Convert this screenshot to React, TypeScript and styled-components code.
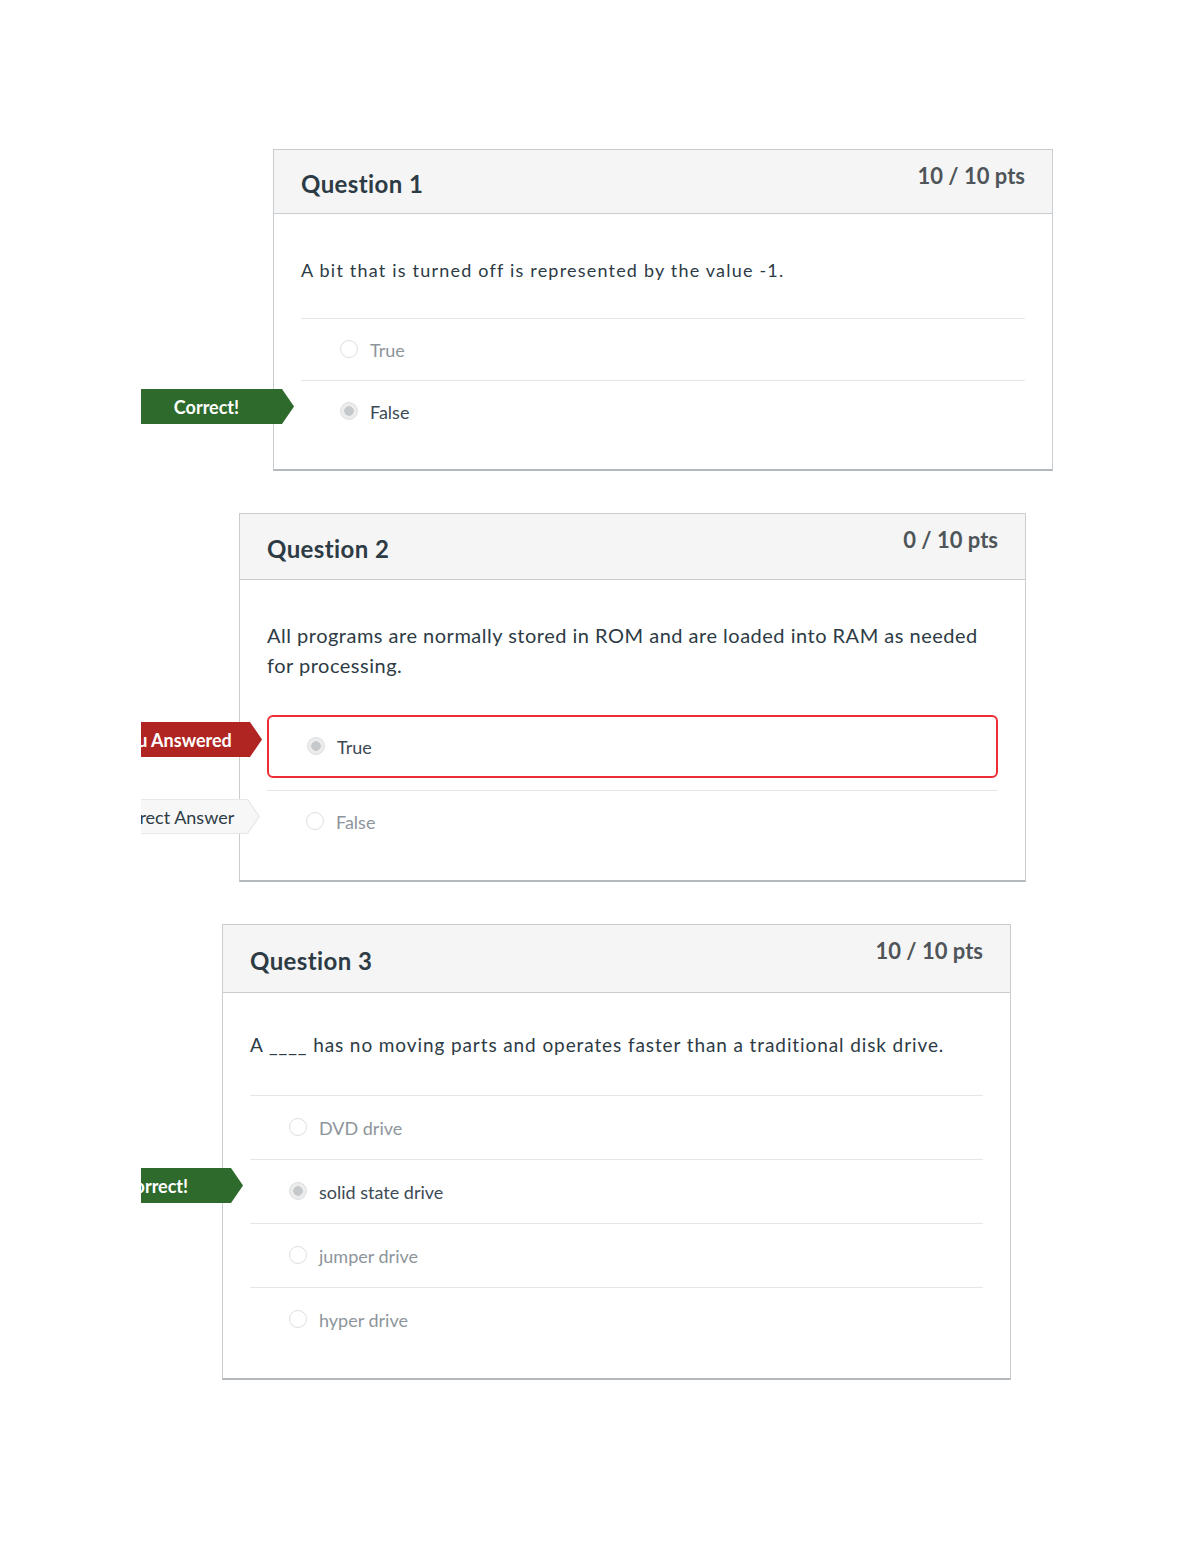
import { FC } from "react";
import styled, { createGlobalStyle } from "styled-components";

const GlobalStyle = createGlobalStyle`
    body {
        margin: 0;
        background: #ffffff;
        font-family: Lato, "Open Sans", sans-serif;
        color: #2d3b45;
    }
`;

type BadgeKind = "correct" | "wrong" | "answer";

interface Answer {
    text: string;
    selected?: boolean;
    wrong?: boolean;
    badge?: BadgeKind;
}

interface Question {
    title: string;
    pts: string;
    text: string;
    textSize: number;
    spacing: number;
    offset: number;
    width: number;
    headerH: number;
    padTop: number;
    textGap: number;
    rowH: number;
    answers: Answer[];
}

const QUESTIONS: Question[] = [
    {
        title: "Question 1",
        pts: "10 / 10 pts",
        text: "A bit that is turned off is represented by the value -1.",
        textSize: 18,
        spacing: 1.2,
        offset: 132,
        width: 780,
        headerH: 64,
        padTop: 41,
        textGap: 33,
        rowH: 62,
        answers: [
            { text: "True" },
            { text: "False", selected: true, badge: "correct" },
        ],
    },
    {
        title: "Question 2",
        pts: "0 / 10 pts",
        text: "All programs are normally stored in ROM and are loaded into RAM as needed for processing.",
        textSize: 20,
        spacing: 0.5,
        offset: 98,
        width: 787,
        headerH: 66,
        padTop: 40,
        textGap: 35,
        rowH: 63,
        answers: [
            { text: "True", selected: true, wrong: true, badge: "wrong" },
            { text: "False", badge: "answer" },
        ],
    },
    {
        title: "Question 3",
        pts: "10 / 10 pts",
        text: "A ____ has no moving parts and operates faster than a traditional disk drive.",
        textSize: 19,
        spacing: 0.9,
        offset: 81,
        width: 789,
        headerH: 68,
        padTop: 37,
        textGap: 35,
        rowH: 64,
        answers: [
            { text: "DVD drive" },
            { text: "solid state drive", selected: true, badge: "correct" },
            { text: "jumper drive" },
            { text: "hyper drive" },
        ],
    },
];

const BADGE_TEXT: Record<BadgeKind, string> = {
    correct: "Correct!",
    wrong: "You Answered",
    answer: "Correct Answer",
};

const Stage = styled.div`
    margin-left: 141px;
    width: 1059px;
    overflow: hidden;
    padding: 149px 0 170px;
    display: flex;
    flex-direction: column;
    gap: 42px;
`;

const Card = styled.div<{ $offset: number; $width: number }>`
    margin-left: ${p => p.$offset}px;
    width: ${p => p.$width}px;
    box-sizing: border-box;
    border: 1px solid #c7cdd1;
    border-bottom: 2px solid #b4b9bd;
    background: #ffffff;
`;

const Header = styled.div<{ $h: number }>`
    display: flex;
    justify-content: space-between;
    align-items: flex-start;
    background: #f5f5f5;
    border-bottom: 1px solid #c7cdd1;
    height: ${p => p.$h}px;
    box-sizing: border-box;
    padding: 0 27px;
`;

const Title = styled.h2<{ $h: number }>`
    margin: 0;
    padding-top: ${p => 19 + (p.$h - 64) / 2}px;
    font-size: 24px;
    font-weight: 700;
    letter-spacing: 0.4px;
    color: #2d3b45;
    line-height: 30px;
`;

const Pts = styled.span`
    padding-top: 12px;
    font-size: 22px;
    font-weight: 700;
    color: #4f5559;
    line-height: 28px;
`;

const Body = styled.div<{ $pad: number }>`
    padding: ${p => p.$pad}px 27px 27px;
`;

const Text = styled.p<{ $size: number; $spacing: number; $gap: number }>`
    margin: 0 0 ${p => p.$gap}px;
    font-size: ${p => p.$size}px;
    letter-spacing: ${p => p.$spacing}px;
    line-height: 30px;
    color: #2d3b45;
`;

const List = styled.div`
    display: flex;
    flex-direction: column;
`;

const Row = styled.div<{ $wrong?: boolean; $h: number }>`
    position: relative;
    display: flex;
    align-items: center;
    gap: 12px;
    height: ${p => p.$h}px;
    box-sizing: border-box;
    padding-left: ${p => (p.$wrong ? 38 : 39)}px;
    border-top: ${p => (p.$wrong ? "none" : "1px solid #e4e6e8")};
    ${p =>
        p.$wrong &&
        `
        border: 2px solid #ee2d35;
        border-radius: 6px;
        margin-bottom: 12px;
    `}
    & + & {
        border-top: 1px solid #e4e6e8;
    }
`;

const Radio = styled.span<{ $on?: boolean }>`
    width: 16px;
    height: 16px;
    border-radius: 50%;
    border: 1px solid #dcdfe1;
    background: ${p => (p.$on ? "radial-gradient(circle, #c4c8cb 0 4.5px, #ececec 5px)" : "#ffffff")};
    flex-shrink: 0;
    margin-top: -2px;
`;

const Label = styled.span<{ $on?: boolean }>`
    font-size: 18px;
    color: ${p => (p.$on ? "#3d4a54" : "#8d959b")};
`;

const Badge = styled.div<{ $kind: BadgeKind; $top: number }>`
    position: absolute;
    right: calc(100% + 7px);
    top: ${p => p.$top}px;
    width: 150px;
    height: 35px;
    padding-right: 12px;
    box-sizing: content-box;
    font-size: 18px;
    clip-path: polygon(0 0, 150px 0, 162px 50%, 150px 100%, 0 100%);
    background: ${p =>
        p.$kind === "correct" ? "#2d6a2b" : p.$kind === "wrong" ? "#b02421" : "#e6e8e9"};
    color: ${p => (p.$kind === "answer" ? "#2d3b45" : "#ffffff")};
    font-weight: ${p => (p.$kind === "answer" ? 400 : 700)};
`;

const BadgeInner = styled.span<{ $kind: BadgeKind }>`
    position: absolute;
    inset: 1px 1px 1px 0;
    display: flex;
    align-items: center;
    justify-content: center;
    padding-right: 12px;
    clip-path: polygon(0 0, 149px 0, 160.5px 50%, 149px 100%, 0 100%);
    background: ${p => (p.$kind === "answer" ? "#f7f7f7" : "transparent")};
`;

const QuestionCard: FC<{ q: Question }> = ({ q }) => (
    <Card $offset={q.offset} $width={q.width}>
        <Header $h={q.headerH}>
            <Title $h={q.headerH}>{q.title}</Title>
            <Pts>{q.pts}</Pts>
        </Header>
        <Body $pad={q.padTop}>
            <Text $size={q.textSize} $spacing={q.spacing} $gap={q.textGap}>
                {q.text}
            </Text>
            <List>
                {q.answers.map(a => (
                    <Row key={a.text} $wrong={a.wrong} $h={q.rowH}>
                        {a.badge && (
                            <Badge $kind={a.badge} $top={a.wrong ? 5 : 8}>
                                <BadgeInner $kind={a.badge}>{BADGE_TEXT[a.badge]}</BadgeInner>
                            </Badge>
                        )}
                        <Radio $on={a.selected} />
                        <Label $on={a.selected}>{a.text}</Label>
                    </Row>
                ))}
            </List>
        </Body>
    </Card>
);

const App: FC = () => (
    <>
        <GlobalStyle />
        <Stage>
            {QUESTIONS.map(q => (
                <QuestionCard key={q.title} q={q} />
            ))}
        </Stage>
    </>
);

export default App;
